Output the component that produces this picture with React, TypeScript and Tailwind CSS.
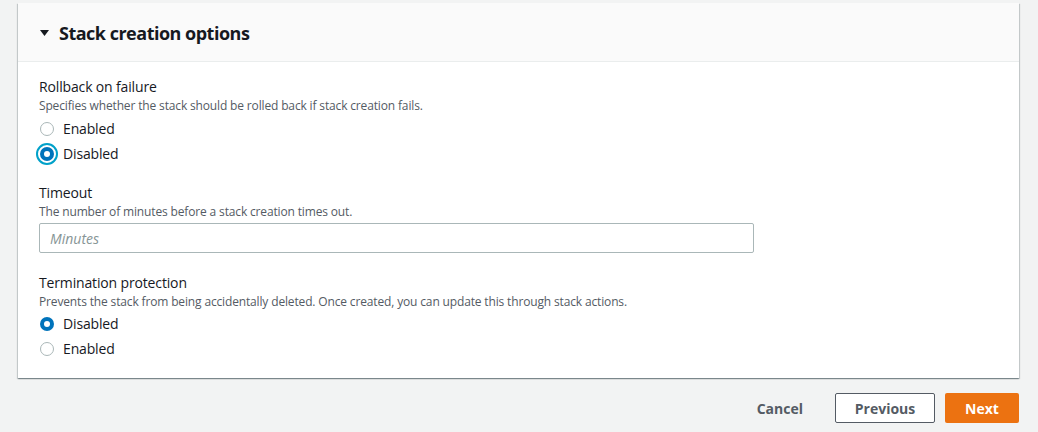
import React from "react";

function Radio({ checked, focused, label }: { checked: boolean; focused?: boolean; label: string }) {
  return (
    <label className="flex h-[25px] items-center">
      <span className="relative ml-[1px] flex h-[14px] w-[14px] items-center justify-center">
        {focused && (
          <span className="absolute -inset-[4px] rounded-full border-2 border-[#00a1c9]" />
        )}
        {checked ? (
          <span className="flex h-[14px] w-[14px] items-center justify-center rounded-full bg-[#0073bb]">
            <span className="h-[6px] w-[6px] rounded-full bg-white" />
          </span>
        ) : (
          <span className="h-[14px] w-[14px] rounded-full border border-[#aab7b8] bg-white" />
        )}
      </span>
      <span className="ml-[9px] text-[14px] leading-[22px] tracking-[-0.15px] text-[#16191f]">{label}</span>
    </label>
  );
}

function FieldLabel({ title, desc }: { title: string; desc: string }) {
  return (
    <div>
      <div className="text-[14px] leading-[22px] tracking-[-0.15px] text-[#16191f]">{title}</div>
      <div className="text-[12px] leading-[16px] tracking-[-0.15px] text-[#545b64]">{desc}</div>
    </div>
  );
}

export default function App() {
  return (
    <div
      className="min-h-[432px] w-[1038px] bg-[#f2f3f3] pl-[18px] pr-[19px] pt-[3px]"
      style={{ fontFamily: '"Open Sans", "Noto Sans", Arial, sans-serif' }}
    >
      <div className="bg-white shadow-[0_1px_1px_0_rgba(0,28,36,0.3),1px_1px_1px_0_rgba(0,28,36,0.15),-1px_1px_1px_0_rgba(0,28,36,0.15)]">
        <div className="flex h-[59px] items-center border-b border-[#eaeded] bg-[#fafafa] pl-[22px] pt-[2px]">
          <svg width="9" height="8" viewBox="0 0 9 8" className="mr-[10px]">
            <polygon points="0,1 9,1 4.5,7" fill="#16191f" />
          </svg>
          <h2 className="text-[18px] font-bold leading-[22px] tracking-[-0.5px] text-[#16191f]">Stack creation options</h2>
        </div>
        <div className="px-[21px] pb-[17px] pt-[14px]">
          <FieldLabel
            title="Rollback on failure"
            desc="Specifies whether the stack should be rolled back if stack creation fails."
          />
          <div className="mt-[2px]">
            <Radio checked={false} label="Enabled" />
            <Radio checked focused label="Disabled" />
          </div>

          <div className="mt-[16px]">
            <FieldLabel title="Timeout" desc="The number of minutes before a stack creation times out." />
            <input
              placeholder="Minutes"
              className="mt-[3px] h-[30px] w-[715px] rounded-[2px] border border-[#aab7b8] bg-white px-[10px] text-[14px] placeholder:italic placeholder:text-[#879596] outline-none"
            />
          </div>

          <div className="mt-[19px]">
            <FieldLabel
              title="Termination protection"
              desc="Prevents the stack from being accidentally deleted. Once created, you can update this through stack actions."
            />
            <div className="mt-[1px]">
              <Radio checked label="Disabled" />
              <Radio checked={false} label="Enabled" />
            </div>
          </div>
        </div>
      </div>

      <div className="mt-[15px] flex items-center justify-end">
        <button className="h-[30px] px-[20px] text-[14px] font-bold text-[#545b64]">Cancel</button>
        <button className="ml-[12px] h-[30px] w-[100px] rounded-[2px] border border-[#545b64] bg-white text-[14px] font-bold text-[#545b64]">
          Previous
        </button>
        <button className="ml-[10px] h-[30px] w-[74px] rounded-[2px] bg-[#ec7211] text-[14px] font-bold text-white">
          Next
        </button>
      </div>
    </div>
  );
}
